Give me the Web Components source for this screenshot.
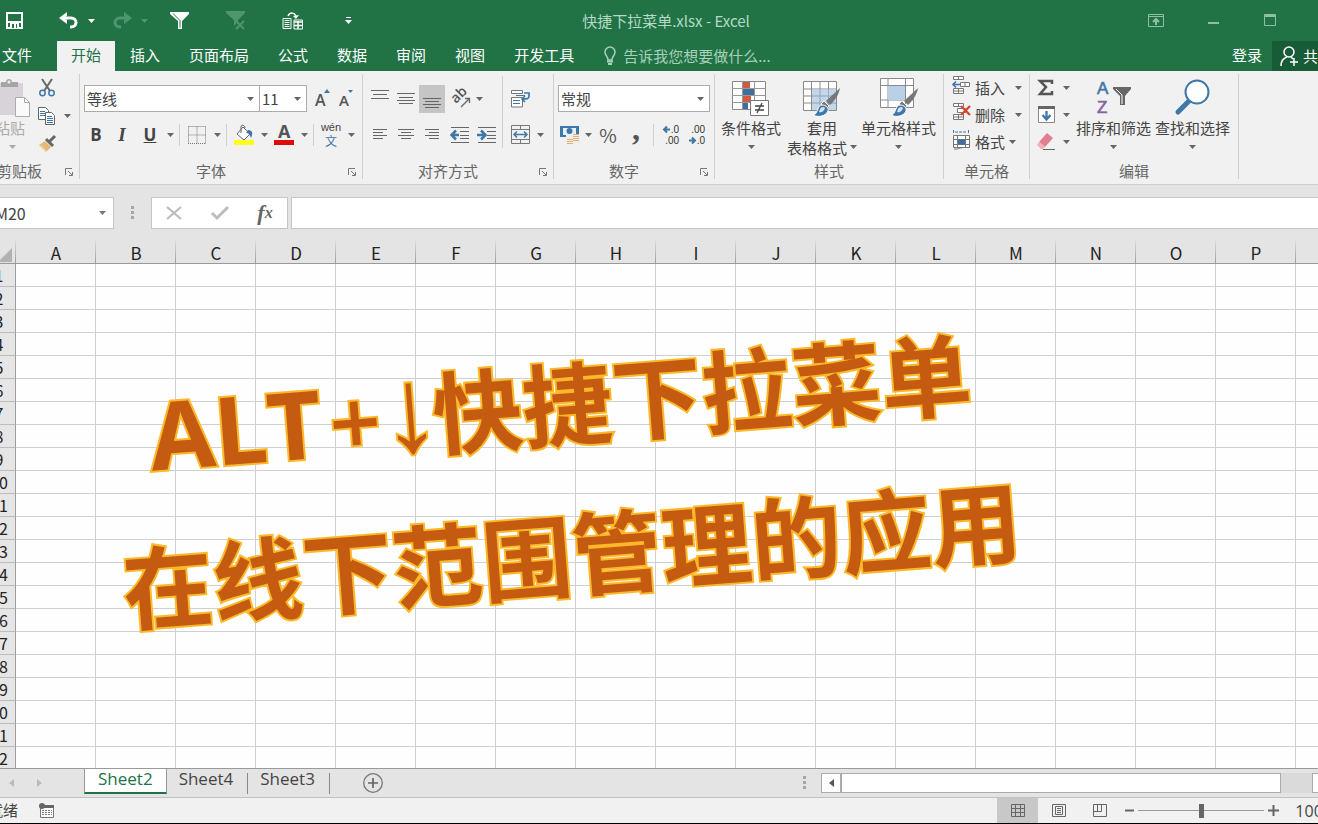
<!DOCTYPE html>
<html lang="zh-CN">
<head>
<meta charset="utf-8">
<title>快捷下拉菜单.xlsx - Excel</title>
<style>
  html, body { margin: 0; height: 100%; }
  body { font: 15px/20px "Noto Sans CJK SC", "Open Sans", sans-serif; color: #444; overflow: hidden; }
</style>
</head>
<body>
<xl-app></xl-app>
<script>
const g = '#666', b = '#3f77a8';
const lines = (list, c = g) => list.map(([x, y, w]) => `<path d="M${x} ${y}.5h${w}" stroke="${c}"/>`).join('');
const letter = (t, x, y, size, color, extra = '') => `<text x="${x}" y="${y}" font-family="Open Sans, sans-serif" font-size="${size}" fill="${color}" ${extra}>${t}</text>`;
const brush = `<path d="M37 7l-14 13 4 4C31 20 36 14 37 7z" fill="#777"/><path d="M21 20l5 5-3 3-5-5z" fill="#777" stroke="#f5f5f5"/><path d="M10 34c5 0 4-10 9-10 4 0 7 3 6 6-2 5-10 7-15 4z" fill="#3f77a8" stroke="#fff"/><path d="M17 28c1-2 4-3 5-1-1 3-3 5-6 4z" fill="#cfe2f2"/>`;
const lightGrid = `<path d="M.5.500h33v29H.5zM8.500.5v29M17 .5v29M25.500.5v29M.5 8h33M.5 15h33M.5 22h33" fill="#fff" stroke="#8a8a8a"/>`;
const ICONS = {
  caret: [7, 4, `<path d="M0 0h7L3.500 4z" fill="currentColor"/>`],
  save: [17, 17, `<path d="M1 1h15v15H1z" fill="none" stroke="#fff" stroke-width="2"/><path d="M2 10h13" stroke="#fff" stroke-width="2"/><path d="M4 11h9v5H4z" fill="#fff"/><path d="M6 12h2v4H6zM10 12h1v4h-1z" fill="#217346"/>`],
  undo: [20, 17, `<path d="M3 6h9c3 0 5 2 5 4.500S15 15 12 15h-1" fill="none" stroke="#fff" stroke-width="3"/><path d="M8 0v4L5 6l3 2v4L0 6z" fill="#fff"/>`],
  redo: [20, 17, `<g fill="none" stroke="#4f9670"><path d="M15 6H8C5 6 3 8 3 10.500S5 15 8 15h1" stroke-width="3"/></g><path d="M12 0v4l3 2-3 2v4l8-6z" fill="#4f9670"/>`],
  filter: [20, 18, `<path d="M0 0h19v2l-7 7v8H8V9L0 2z" fill="#fff"/><path d="M3 1.500l7 7v7" fill="none" stroke="#217346"/>`],
  unfilter: [20, 19, `<g fill="#4f9670"><path d="M0 0h19v2l-7 7v1l-4 5V9L0 2z"/></g><path d="M10 10l8 8M18 10l-8 8" stroke="#4f9670" stroke-width="2"/>`],
  refresh: [21, 18, `<path d="M1 6.500h8v10H1z" fill="none" stroke="#fff"/><path d="M2.500 8.500h5M2.500 10.500h5M2.500 12.500h5M2.500 14.500h5" stroke="#fff"/><path d="M12 8h8.500v9H12z" fill="none" stroke="#fff"/><path d="M12 10h8M12 13.500h8M16 9v8" stroke="#fff" stroke-width="1.500"/><path d="M6 4c2-4 7-4 8 1" fill="none" stroke="#fff" stroke-width="1.500"/><path d="M11 4l3 3 3-4z" fill="#fff"/>`],
  more: [7, 7, `<path d="M1 .5h5" stroke="#fff"/><path d="M0 3h7L3.500 7z" fill="#fff"/>`],
  display: [17, 13, `<path d="M.5.500h15v12H.5zM.5 2.500h15" fill="none" stroke="#8fc0a5"/><path d="M8 11V5M5 8l3-3 3 3" fill="none" stroke="#8fc0a5" stroke-width="2"/>`],
  minimize: [11, 13, `<path d="M0 9h11" stroke="#8fc0a5" stroke-width="2"/>`],
  maximize: [13, 13, `<path d="M.5.500h11v11H.5z" fill="none" stroke="#8fc0a5"/><path d="M0 2h12" stroke="#8fc0a5" stroke-width="2"/>`],
  bulb: [12, 19, `<path d="M4 13c0-4-3-4-3-8a5 5 0 0 1 10 0c0 4-3 4-3 8z" fill="none" stroke="#a9d0ba" stroke-width="1.500"/><path d="M3 14.500h6M4 17h4" stroke="#a9d0ba" stroke-width="2"/>`],
  person: [19, 21, `<circle cx="9" cy="6" r="5" fill="none" stroke="#fff" stroke-width="1.500"/><path d="M1 20c0-5 3-8 6-9M11 11l2 2M14 12v8M10 16h8" fill="none" stroke="#fff" stroke-width="1.500"/>`],
  paste: [30, 38, `<path d="M-6 4h29v32H-6z" fill="#d8d3d8"/><path d="M1 3h5c0-4 6-4 6 0h6v5H1z" fill="#a5a5a5"/><circle cx="9" cy="3" r="1.500" fill="#eee"/><path d="M15.500 18.500h9l5 5v14h-14z" fill="#fafafa" stroke="#aaa"/><path d="M24.500 18.500v5h5" fill="none" stroke="#aaa"/>`],
  cut: [16, 18, `<path d="M3 0l8 12M13 0L5 12" stroke="#666" stroke-width="2"/><circle cx="3.500" cy="14" r="2.700" fill="none" stroke="${b}" stroke-width="1.500"/><circle cx="12.500" cy="14" r="2.700" fill="none" stroke="${b}" stroke-width="1.500"/>`],
  copy: [18, 18, `<path d="M.5.500h7l3 3v9H.5z" fill="#fff" stroke="#666"/><path d="M2 4.500h5M2 6.500h5M2 8.500h5" stroke="${b}"/><path d="M7.500 5.500h6l3 3v9h-9z" fill="#fff" stroke="#666"/><path d="M9 9.500h5M9 11.500h6M9 13.500h6M9 15.500h6" stroke="${b}"/>`],
  painter: [17, 16, `<path d="M16 0l-5 5M7 3l7 7" stroke="#666" stroke-width="3"/><path d="M6 5l6 6-5 5-7-7z" fill="#e5b878"/><path d="M2 9l5 6" stroke="#f3d9ac"/>`],
  grow: [14, 18, letter('A', 0, 16, 16, '#555', 'font-weight="600"') + `<path d="M9 3l3-4 3 4z" fill="${b}"/>`],
  shrink: [14, 18, letter('A', 0, 16, 15, '#555', 'font-weight="600"') + `<path d="M9 0h5l-2.500 3z" fill="${b}"/>`],
  border: [18, 18, `<path d="M.5.500v17M.5.500h17M17.500.5v17M9 .5v17M.5 9h17" fill="none" stroke="#777" stroke-dasharray="1 1"/><path d="M0 17.500h18" stroke="#777" stroke-dasharray="1 1"/>`],
  fill: [22, 20, `<path d="M10 2l7 7-6 6-7-6z" fill="#fff" stroke="#666"/><path d="M8 8V2c0-3 4-2 4 1" fill="none" stroke="#666"/><path d="M15 5c5 0 5 4 3 8-1-3-2-5-5-5z" fill="${b}"/><path d="M1 15h20v5H1z" fill="#ffff1e"/>`],
  fontcolor: [20, 20, letter('A', 4, 13, 18, '#555', 'font-weight="700"') + `<path d="M0 15h20v5H0z" fill="#e00b0b"/>`],
  alignTop: [18, 18, lines([[0, 0, 18], [2, 4, 14], [0, 8, 18]])],
  alignMid: [18, 18, lines([[0, 3, 18], [2, 7, 14], [0, 10, 18], [2, 13, 14]])],
  alignBot: [18, 18, lines([[0, 8, 18], [2, 11, 14], [0, 14, 18], [2, 17, 14]])],
  orient: [19, 17, letter('ab', 6, 14, 14, '#555', 'font-weight="600" transform="rotate(-45 6 14)"') + `<path d="M11 17l8-8M15 8.500h4.500V13" fill="none" stroke="#666" stroke-width="1.300"/>`],
  left: [14, 14, lines([[0, 1, 14], [0, 4, 10], [0, 7, 14], [0, 10, 10]])],
  center: [16, 14, lines([[0, 1, 16], [3, 4, 10], [0, 7, 16], [3, 10, 10]])],
  right: [14, 14, lines([[0, 1, 14], [4, 4, 10], [0, 7, 14], [4, 10, 10]])],
  outdent: [19, 16, lines([[1, 0, 18], [10, 4, 9], [10, 8, 9], [10, 11, 9], [1, 15, 18]]) + `<path d="M9 8H2M6 3.500L1.500 8 6 12.500" fill="none" stroke="${b}" stroke-width="2.500"/>`],
  indent: [19, 16, lines([[1, 0, 18], [10, 4, 9], [10, 8, 9], [10, 11, 9], [1, 15, 18]]) + `<path d="M0 8h7M4 3.500L8.500 8 4 12.500" fill="none" stroke="${b}" stroke-width="2.500"/>`],
  wrap: [19, 18, `<path d="M.5.500h11v3H.5zM.5 7.500h11v9.500H.5z" fill="#fff" stroke="#777"/><path d="M2 10.500h7M2 13.500h7M5 5.500h9" stroke="${b}"/><path d="M13 3h5v3c0 3-2 3-6 3M14 6l-3 3 3 3" fill="none" stroke="${b}" stroke-width="1.700"/>`],
  merge: [19, 19, `<path d="M.5.500h18v18H.5zM.5 4.500h18M.5 14.500h18M9.500.5v4M9.500 14.500v4" fill="none" stroke="#777"/><path d="M3 9.500h13M6 6.500l-3 3 3 3M13 6.500l3 3-3 3" fill="none" stroke="${b}" stroke-width="1.500"/>`],
  currency: [20, 18, `<path d="M0 0h19v11H0z" fill="${b}"/><path d="M3 2h13v7H3z" fill="#e8f1f8"/><circle cx="9.500" cy="5" r="3" fill="${b}"/><path d="M6 9h14v9H6z" fill="#eee"/><path d="M7 13.500h6M7 15.500h6M7 17.500h6M13 8.500h6M13 10.500h6M13 12.500h6M13 14.500h6" stroke="#e5b070"/>`],
  arrowLeft: [7, 7, `<path d="M1 3.500h6M4 .5l-3 3 3 3" fill="none" stroke="${b}" stroke-width="2"/>`],
  arrowRight: [7, 7, `<path d="M0 3.500h6M3 .5l3 3-3 3" fill="none" stroke="${b}" stroke-width="2"/>`],
  condition: [38, 36, `<path d="M.5.500h33v28H.5z" fill="#fff" stroke="#888"/><path d="M.5 7.500h33M.5 14.500h33M.5 21.500h33M10.500.5v28M22.500.5v28" stroke="#999"/><path d="M11 1h7v6h-7zM11 15h8v6h-8z" fill="#cf5b41"/><path d="M11 8h11v6H11zM11 22h5v6h-5z" fill="#3f6f9f"/><path d="M18.500 19.500h18v15h-18z" fill="#fff" stroke="#777"/><path d="M23 25h9M23 29h9M30 22l-5 10" stroke="#444" stroke-width="1.300"/>`],
  tablefmt: [38, 36, lightGrid + `<path d="M9 8h24v21H9z" fill="#b9d0e6" opacity=".85"/><path d="M17 8v21M25.500 8v21M9 15h24M9 22h24" stroke="#9ab"/>` + brush],
  cellstyle: [38, 39, `<path d="M.5.500h33v29H.5zM8 .5v29M25.500.5v29M.5 7.500h33M.5 22h33" fill="#fff" stroke="#8a8a8a"/><path d="M8 8h17v14H8z" fill="#b9d0e6"/><g transform="translate(1 3)">${brush}</g>`],
  insert: [19, 19, `<path d="M1.500.500h10v3h-10zM6.500.5v3M1.500 12.500h10v5h-10zM6.500 12.500v5M1.500 15h10M8.500 6.500h9v4h-9zM13 6.500v4" fill="#fff" stroke="#777"/><path d="M8 8.500H1M4 5.500l-3 3 3 3" fill="none" stroke="${b}" stroke-width="1.700"/>`],
  remove: [19, 19, `<path d="M1.500.500h10v3h-10zM6.500.5v3M5.500 5.500h8v4h-8zM1.500 11.500h10v5h-10zM6.500 11.500v5M1.500 14h10" fill="#fff" stroke="#777"/><path d="M9 3l9 9M18 3l-9 9" stroke="#d0492f" stroke-width="2.300"/>`],
  format: [19, 20, `<path d="M1.500 0v4M16.500 0v4M3 2h12" stroke="${b}" stroke-dasharray="3 1"/><path d="M1.500 5.500h16v12h-16zM5.500 5.500v12M13.500 5.500v12M1.500 9.500h16M1.500 14.500h16" fill="#fff" stroke="#777"/><path d="M6 9.500h7v5H6z" fill="#3f6f9f"/><path d="M2 19c4 1 6-2 8-1" fill="none" stroke="#777"/>`],
  sum: [16, 17, `<path d="M14 5V2H2l6 6-6 7h12v-3" fill="none" stroke="#555" stroke-width="2.500"/>`],
  down: [17, 17, `<path d="M.5.500h16v16H.5z" fill="#fff" stroke="#888"/><path d="M0 1.500h17" stroke="#666" stroke-width="3"/><path d="M8.500 5v8M4.500 9l4 4.500 4-4.500" fill="none" stroke="${b}" stroke-width="2.300"/>`],
  eraser: [18, 17, `<path d="M10 0l6 5-8 9-6-5z" fill="#e0808f"/><path d="M2 9l6 5-2 2H4l-4-4z" fill="#efb0ba"/><path d="M6 16.500h12" stroke="#666"/>`],
  sort: [36, 38, `<g font-family="Liberation Sans, sans-serif" font-size="17" stroke-width=".6"><text x="1" y="15" fill="${b}" stroke="${b}">A</text><text x="1" y="34" fill="#8a5fa5" stroke="#8a5fa5">Z</text></g><path d="M17 8h18v2l-6 7v9h-5v-9l-7-7z" fill="#666"/><path d="M20 10l6 6v9" fill="none" stroke="#fff"/>`],
  find: [36, 38, `<path d="M14 22L3 33" stroke="${b}" stroke-width="5" stroke-linecap="round"/><circle cx="22" cy="13" r="11.500" fill="#fcfeff" stroke="${b}" stroke-width="2"/>`],
  launcher: [8, 8, `<path d="M.5 7V.5H7" fill="none" stroke="#777"/><path d="M3 3l4 4M7.500 4v3.500H4" fill="none" stroke="#777"/>`],
  cancel: [16, 14, `<path d="M1 1l14 12M15 1L1 13" stroke="#bcbcbc" stroke-width="2.300"/>`],
  accept: [18, 14, `<path d="M1 7l5 5L17 1" fill="none" stroke="#bcbcbc" stroke-width="3"/>`],
  dots: [3, 14, `<path d="M0 0h3v3H0zM0 5h3v3H0zM0 10h3v3H0z" fill="#a6a6a6"/>`],
  prev: [5, 8, `<path d="M5 0v8L0 4z" fill="currentColor"/>`],
  next: [5, 8, `<path d="M0 0v8l5-4z" fill="currentColor"/>`],
  add: [20, 20, `<circle cx="10" cy="10" r="9.300" fill="none" stroke="#777" stroke-width="1.300"/><path d="M5 10h10M10 5v10" stroke="#666" stroke-width="1.700"/>`],
  macro: [16, 16, `<path d="M1.500 4.500h13v10h-13z" fill="#fff" stroke="#777"/><path d="M5 2h10v3H5z" fill="#666"/><circle cx="3" cy="3" r="3" fill="#666"/><path d="M3 7.500h10M3 9.500h10M3 11.500h10" stroke="#777" stroke-dasharray="2 1"/>`],
  normal: [14, 14, `<path d="M.5.500h13v12H.5zM4.500.5v12M9.500.5v12M.5 4.500h13M.5 8.500h13" fill="none" stroke="#666"/>`],
  layout: [14, 14, `<path d="M.5.500h13v12H.5zM3.500 2.500h7v8h-7z" fill="none" stroke="#666"/><path d="M5 4.500h4M5 6.500h4M5 8.500h4" stroke="#666"/>`],
  pagebreak: [14, 14, `<path d="M.5.500h13v12H.5zM.5 7.500h8v-7M4.500.5v7" fill="none" stroke="#666"/>`],
  minus: [9, 9, `<path d="M0 4.500h9" stroke="#666" stroke-width="2"/>`],
  plus: [11, 11, `<path d="M0 5.500h11M5.500 0v11" stroke="#666" stroke-width="2"/>`],
  corner: [14, 14, `<path d="M14 0v14H0z" fill="#b2b2b2"/>`]
};

const define = (name, html, init) => {
  const tpl = document.createElement('template');
  tpl.innerHTML = `<style>*{box-sizing:border-box}button,input,select{font:inherit;color:inherit;border:0;margin:0;padding:0;background:none;border-radius:0}a{color:inherit;text-decoration:none}</style>` + html;
  customElements.define(name, class extends HTMLElement {
    connectedCallback() {
      if (this.shadowRoot) return;
      this.attachShadow({ mode: 'open' }).append(tpl.content.cloneNode(true));
      if (init) init.call(this, this.shadowRoot);
    }
  });
};

/* Icon by name */
define('xl-icon', `<style>:host{display:inline-flex;flex:none}svg{display:block;overflow:visible}</style>`, function (root) {
  const [w, h, body] = ICONS[this.getAttribute('name')];
  root.innerHTML += `<svg width="${w}" height="${h}" viewBox="0 0 ${w} ${h}" aria-hidden="true">${body}</svg>`;
});

/* Small tool button; "drop" adds a caret */
define('xl-tool', `<style>
  :host{display:inline-flex;width:28px;height:28px;flex:none}
  :host([drop]){width:40px}
  :host([w="24"]){width:24px} :host([w="26"]){width:26px} :host([w="36"]){width:36px}
  :host([on]){background:#c5c5c5}
  button{display:flex;flex:1;align-items:center;min-width:0}
  span{flex:1;display:flex;justify-content:center;align-items:center}
  .caret{display:none;flex:none;width:12px;color:#666}
  :host([drop]) .caret{display:flex}
</style><button type="button"><span><slot></slot></span><span class="caret"><xl-icon name="caret"></xl-icon></span></button>`, function (root) {
  root.querySelector('button').setAttribute('aria-label', this.getAttribute('hint'));
  const icon = this.getAttribute('icon');
  if (icon) root.querySelector('slot').innerHTML = `<xl-icon name="${icon}"></xl-icon>`;
});

/* Large ribbon button: icon over a label, caret on the last line */
define('xl-big', `<style>
  :host{display:block;flex:none}
  button{display:flex;flex-direction:column;align-items:center;padding:0 4px;line-height:19px;white-space:nowrap}
  :host([tight]) button{padding:0 2px}
  .pic{height:41px;display:flex;align-items:flex-end;margin-bottom:1px}
  .last{display:flex;align-items:center;gap:3px;height:20px}
  .last xl-icon{color:#666}
</style><button type="button"><span class="pic"></span><slot></slot><span class="last"><slot name="second"></slot><xl-icon name="caret"></xl-icon></span></button>`, function (root) {
  root.querySelector('.pic').innerHTML = `<xl-icon name="${this.getAttribute('icon')}"></xl-icon>`;
});

/* One-line ribbon button */
define('xl-line', `<style>
  :host{display:block}
  button{display:flex;align-items:center;gap:4px;height:27px;white-space:nowrap}
  .caret{margin-left:6px;color:#666} :host([near]) .caret{margin-left:0}
</style><button type="button"><span id="icon"></span><slot></slot><xl-icon class="caret" name="caret"></xl-icon></button>`, function (root) {
  root.querySelector('#icon').innerHTML = `<xl-icon name="${this.getAttribute('icon')}"></xl-icon>`;
});

define('xl-combo', `<style>
  :host{display:grid;height:27px;align-items:center;background:#fff;border:1px solid #ababab}
  select,xl-icon{grid-area:1/1}
  select{appearance:none;width:100%;height:25px;padding:0 2px;outline:0}
  xl-icon{justify-self:end;margin-right:5px;color:#666;pointer-events:none}
</style><select></select><xl-icon name="caret"></xl-icon>`, function (root) {
  const select = root.querySelector('select');
  select.setAttribute('aria-label', this.getAttribute('hint'));
  select.add(new Option(this.getAttribute('value')));
});

define('xl-group', `<style>
  :host{display:flex;flex-direction:column;flex:none;margin:3px 0 5px;border-right:1px solid #cfcfcf}
  .body{flex:1;display:flex}
  footer{position:relative;display:flex;justify-content:center;align-items:center;height:20px;margin-bottom:-2px;color:#666;white-space:nowrap}
  :host([launch]) footer{padding-right:20px}
  :host([edge]) footer{margin-left:-20px}
  button{position:absolute;right:6px;top:7px;display:flex}
  :host(:not([launch])) button{display:none}
</style><div class="body"><slot></slot></div><footer><span></span><button type="button" aria-label="更多选项"><xl-icon name="launcher"></xl-icon></button></footer>`, function (root) {
  root.querySelector('span').textContent = this.getAttribute('label');
});

define('xl-titlebar', `<style>
  :host{display:grid;grid-template-columns:1fr auto 1fr;align-items:center;height:41px;color:#fff}
  .quick,.window{display:flex;align-items:center;height:38px}
  .quick button{display:flex;align-items:center;gap:9px;height:28px}
  .quick{padding-left:6px;gap:36px}
  .quick .dim{color:#4f9670}
  h1{margin:0;padding-left:14px;font:inherit;color:#b5d9c5;white-space:nowrap}
  .window{justify-content:flex-end;padding-right:19px}
  .window button{width:57px;display:flex;justify-content:center}
  .history{display:flex;gap:17px;margin-right:-14px}
</style>
<div class="quick">
  <button aria-label="保存"><xl-icon name="save"></xl-icon></button>
  <div class="history"><button aria-label="撤消"><xl-icon name="undo"></xl-icon><xl-icon name="caret"></xl-icon></button>
  <button class="dim" aria-label="恢复"><xl-icon name="redo"></xl-icon><xl-icon name="caret"></xl-icon></button></div>
  <button aria-label="筛选"><xl-icon name="filter"></xl-icon></button>
  <button aria-label="清除筛选"><xl-icon name="unfilter"></xl-icon></button>
  <button aria-label="刷新"><xl-icon name="refresh"></xl-icon></button>
  <button style="padding-left:6px" aria-label="自定义快速访问工具栏"><xl-icon name="more"></xl-icon></button>
</div>
<h1>快捷下拉菜单.xlsx - Excel</h1>
<div class="window">
  <button aria-label="功能区显示选项"><xl-icon name="display"></xl-icon></button>
  <button aria-label="最小化"><xl-icon name="minimize"></xl-icon></button>
  <button aria-label="最大化"><xl-icon name="maximize"></xl-icon></button>
</div>`);

define('xl-tabs', `<style>
  :host{display:flex;height:30px;color:#fff;overflow:hidden;line-height:28px;white-space:nowrap}
  nav{display:flex;gap:1px}
  nav a{padding:0 14px}
  nav .file{padding:0 24px 0 2px}
  nav .on{background:#f1f1f1;color:#217346}
  label{display:flex;align-items:center;gap:7px;margin-left:16px;flex:1}
  input{flex:1;min-width:0;outline:0;color:#a9d0ba}
  input::placeholder{color:#a9d0ba;opacity:1}
  .login{padding:0 10px}
  .share{display:flex;align-items:center;gap:4px;background:#185c37;padding:0 0 0 8px;margin-right:-15px}
</style>
<nav><a class="file" href="#file">文件</a><a class="on" href="#home">开始</a><a href="#insert">插入</a><a href="#layout">页面布局</a><a href="#formula">公式</a><a href="#data">数据</a><a href="#review">审阅</a><a href="#view">视图</a><a href="#dev">开发工具</a></nav>
<label><xl-icon name="bulb"></xl-icon><input type="text" aria-label="告诉我您想要做什么" placeholder="告诉我您想要做什么..."></label>
<a class="login" href="#login">登录</a>
<button class="share" type="button"><xl-icon name="person"></xl-icon>共享</button>`);

define('xl-ribbon', `<style>
  :host{display:flex;height:114px;background:#f1f1f1;border-bottom:1px solid #d0d0d0;overflow:hidden}
  .col{display:flex;flex-direction:column}
  .rows{display:flex;flex-direction:column;gap:9px;padding:11px 4px 0;flex:1}
  .row{display:flex;align-items:center;height:27px}
  .sep{width:1px;height:22px;background:#cfcfcf;margin:0 3px;flex:none}
  .tall{height:72px;background:#cfcfcf;width:1px;margin:2px 3px 0}
  .clip{width:80px} .font{width:283px} .align{width:191px} .num{width:161px} .styles{width:229px} .cells{width:86px} .edit{width:209px}
  .big{display:flex;padding:2px 2px 0}
  .face{flex:1} .size{width:48px;margin-left:-1px;margin-right:3px} .fmt{flex:1}
  b,i,u{font-family:"Open Sans",sans-serif;font-size:17px;font-weight:700;color:#444}
  i{font-family:"Liberation Serif",serif;font-size:19px}
  .py{display:flex;flex-direction:column;align-items:center;font:11px/12px "Liberation Sans",sans-serif;color:#444}
  .py em{font:12px/15px "Noto Sans CJK SC",sans-serif;color:#3f77a8}
  .dec{display:grid;justify-items:end;font:10px/11px "Liberation Sans",sans-serif;color:#333}
  .dec span{display:flex;align-items:center;gap:1px}
  .pct{font-size:19px;color:#555} .comma{font:700 32px/20px "Liberation Serif",serif;height:32px;color:#555}
  .paste{width:30px;margin-top:5px;color:#aaa;white-space:nowrap;line-height:19px}
  .paste button{display:flex;flex-direction:column;align-items:center}
  .paste .txt{margin:1px 0 8px -10px}
  .paste .drop{margin-left:-6px}
  .stack{padding-left:8px}
  .tools{padding-left:2px}
  .tools xl-tool{height:27px}
  .clipcol{padding-left:3px}
</style>
<xl-group class="clip" label="剪贴板" launch edge>
  <div class="paste"><button type="button" aria-label="粘贴"><xl-icon name="paste"></xl-icon><span class="txt">粘贴</span><xl-icon class="drop" name="caret"></xl-icon></button></div>
  <div class="col clipcol"><xl-tool icon="cut" hint="剪切"></xl-tool><xl-tool drop icon="copy" hint="复制"></xl-tool><xl-tool icon="painter" hint="格式刷"></xl-tool></div>
</xl-group>
<xl-group class="font" label="字体" launch><div class="rows">
  <div class="row"><xl-combo class="face" hint="字体" value="等线"></xl-combo><xl-combo class="size" hint="字号" value="11"></xl-combo><xl-tool w="24" icon="grow" hint="增大字号"></xl-tool><xl-tool w="24" icon="shrink" hint="减小字号"></xl-tool></div>
  <div class="row"><xl-tool w="24" hint="加粗"><b>B</b></xl-tool><xl-tool hint="倾斜"><i>I</i></xl-tool><xl-tool drop hint="下划线"><u>U</u></xl-tool><span class="sep"></span><xl-tool drop icon="border" hint="边框"></xl-tool><span class="sep"></span><xl-tool drop icon="fill" hint="填充颜色"></xl-tool><xl-tool drop icon="fontcolor" hint="字体颜色"></xl-tool><span class="sep"></span><xl-tool drop hint="拼音"><span class="py">wén<em>文</em></span></xl-tool></div>
</div></xl-group>
<xl-group class="align" label="对齐方式" launch>
  <div class="rows" style="flex:none;padding-right:0">
    <div class="row"><xl-tool w="26" icon="alignTop" hint="顶端对齐"></xl-tool><xl-tool w="26" icon="alignMid" hint="垂直居中"></xl-tool><xl-tool w="26" on icon="alignBot" hint="底端对齐"></xl-tool><xl-tool drop icon="orient" hint="方向"></xl-tool></div>
    <div class="row"><xl-tool w="26" icon="left" hint="左对齐"></xl-tool><xl-tool w="26" icon="center" hint="居中"></xl-tool><xl-tool w="26" icon="right" hint="右对齐"></xl-tool><xl-tool icon="outdent" hint="减少缩进量"></xl-tool><xl-tool w="26" icon="indent" hint="增加缩进量"></xl-tool></div>
  </div><span class="tall"></span>
  <div class="rows" style="padding-left:0"><div class="row"><xl-tool icon="wrap" hint="自动换行"></xl-tool></div><div class="row"><xl-tool drop icon="merge" hint="合并后居中"></xl-tool></div></div>
</xl-group>
<xl-group class="num" label="数字" launch><div class="rows">
  <div class="row"><xl-combo class="fmt" hint="数字格式" value="常规"></xl-combo></div>
  <div class="row"><xl-tool drop w="36" icon="currency" hint="会计数字格式"></xl-tool><xl-tool hint="百分比样式"><span class="pct">%</span></xl-tool><xl-tool hint="千位分隔样式"><span class="comma">,</span></xl-tool><span class="sep"></span><xl-tool hint="增加小数位数"><span class="dec"><span><xl-icon name="arrowLeft"></xl-icon>.0</span><span>.00</span></span></xl-tool><xl-tool w="24" hint="减少小数位数"><span class="dec"><span>.00</span><span><xl-icon name="arrowRight"></xl-icon>.0</span></span></xl-tool></div>
</div></xl-group>
<xl-group class="styles" label="样式"><div class="big"><xl-big icon="condition">条件格式</xl-big><xl-big icon="tablefmt" tight>套用<span slot="second">表格格式</span></xl-big><xl-big icon="cellstyle" tight>单元格样式</xl-big></div></xl-group>
<xl-group class="cells" label="单元格"><div class="stack"><xl-line icon="insert">插入</xl-line><xl-line icon="remove">删除</xl-line><xl-line near icon="format">格式</xl-line></div></xl-group>
<xl-group class="edit" label="编辑"><div class="col tools"><xl-tool drop icon="sum" hint="自动求和"></xl-tool><xl-tool drop icon="down" hint="填充"></xl-tool><xl-tool drop icon="eraser" hint="清除"></xl-tool></div><div class="big"><xl-big tight icon="sort">排序和筛选</xl-big><xl-big tight icon="find">查找和选择</xl-big></div></xl-group>`);

define('xl-formula', `<style>
  :host{display:flex;height:53px;padding:12px 0 9px;background:#e4e4e4;overflow:hidden}
  .box{display:flex;align-items:center;background:#fff;border:1px solid #c6c6c6;height:32px}
  .name{width:120px;margin-left:-6px;padding:0 7px 0 0;font-size:16px}
  .name input{flex:1;min-width:0;outline:0}
  .name button{display:flex;color:#777}
  .dots{width:37px;display:flex;align-items:center;justify-content:center;height:32px}
  .act{width:137px;justify-content:space-around;margin-right:3px}
  .act button{display:flex}
  .fx{font:italic 700 22px/26px "Liberation Serif",serif;color:#666}
  .fx sub{font-size:16px;vertical-align:baseline}
  .line{flex:1;border-right:0} .line input{flex:1;height:28px;outline:0;padding:0 6px}
</style>
<div class="box name"><input type="text" aria-label="名称框" value="M20"><button type="button" aria-label="名称列表"><xl-icon name="caret"></xl-icon></button></div>
<span class="dots"><xl-icon name="dots"></xl-icon></span>
<div class="box act"><button type="button" aria-label="取消"><xl-icon name="cancel"></xl-icon></button><button type="button" aria-label="输入"><xl-icon name="accept"></xl-icon></button><button type="button" class="fx" aria-label="插入函数">f<sub>x</sub></button></div>
<div class="box line"><input type="text" aria-label="编辑栏"></div>`);

define('xl-sheet', `<style>
  :host{display:block;position:relative;flex:1;min-height:0;overflow:hidden;background:#fefefe}
  table{border-collapse:separate;border-spacing:0;table-layout:fixed;width:1393px;margin-left:-17px;color:#222}
  th{font-weight:400;padding:0;background-color:#e6e6e6;height:23px;line-height:20px;text-align:center;border-right:1px solid #9c9c9c;border-bottom:1px solid #bcbcbc;font-size:16px}
  thead th{height:26px;padding-top:5px;font-size:17px;background:linear-gradient(#e4e4e4,#9c9c9c) right/1px 100% no-repeat #e4e4e4;border-right:0;border-bottom-color:#999}
  thead th:first-child{width:33px}
  thead xl-icon{float:right;margin:3px 4px 0 0}
  td{padding:0;border-right:1px solid #d0d0d0;border-bottom:1px solid #d0d0d0}
</style><table><thead></thead><tbody></tbody></table><slot></slot>`, function (root) {
  const letters = [...'ABCDEFGHIJKLMNOPQ'];
  root.querySelector('thead').innerHTML = '<tr><th><xl-icon name="corner"></xl-icon></th>' + letters.map(l => `<th scope="col">${l}</th>`).join('') + '</tr>';
  root.querySelector('tbody').innerHTML = Array.from({ length: 22 }, (_, i) => `<tr><th scope="row">${i + 1}</th>${'<td></td>'.repeat(letters.length)}</tr>`).join('');
});

/* Tilted decorative heading drawn over the cells */
define('xl-wordart', `<style>
  :host{position:absolute;left:566px;top:242px;transform:translate(-50%,-50%) rotate(-4.4deg);text-align:center;white-space:nowrap;
    font:700 90px/151px "Open Sans","Noto Sans CJK SC",sans-serif;color:#c55a11;-webkit-text-stroke:4px #fbb829;paint-order:stroke fill}
  p{margin:0}
  .latin{font-size:94px;line-height:0}
  .plus{font-weight:600;padding-left:8px}
  .arrow{font:400 120px/0 "Liberation Sans",sans-serif;margin-right:-8px}
</style><p><span class="latin">ALT</span><span class="plus">+</span><span class="arrow">↓</span>快捷下拉菜单</p><p>在线下范围管理的应用</p>`);

define('xl-sheetbar', `<style>
  :host{display:flex;height:29px;background:#e4e4e4;border-top:1px solid #999;overflow:hidden;font:17px/20px "Open Sans",sans-serif}
  .nav{display:flex;width:84px;padding-left:9px;gap:23px;color:#bbb;flex:none}
  .nav button{display:flex;align-items:center}
  .tabs{display:flex;height:25px}
  .tabs a{padding:0 15px 0 12px;background:linear-gradient(#888,#888) right bottom/1px 21px no-repeat}
  .tabs .on{background:#fff;color:#217346;border-bottom:2px solid #217346;border-right:1px solid #999;border-left:1px solid #999;padding:0 13px}
  .add{display:flex;align-items:center;margin-left:33px}
  .scroll{display:flex;align-items:center;margin-left:auto;width:529px;margin-right:-14px;flex:none}
  .scroll button{width:20px;height:20px;border:1px solid #ababab;background:#fff;display:flex;align-items:center;justify-content:center;color:#555}
  .track{flex:1;height:20px;background:#dadada;padding-right:31px}
  .thumb{height:20px;border:1px solid #ababab;background:#fff}
  .grip{margin-right:15px;display:flex}
</style>
<div class="nav"><button type="button" aria-label="上一张"><xl-icon name="prev"></xl-icon></button><button type="button" aria-label="下一张"><xl-icon name="next"></xl-icon></button></div>
<div class="tabs"><a class="on" href="#s2">Sheet2</a><a href="#s4">Sheet4</a><a href="#s3">Sheet3</a></div>
<button class="add" type="button" aria-label="新工作表"><xl-icon name="add"></xl-icon></button>
<div class="scroll"><span class="grip"><xl-icon name="dots"></xl-icon></span><button type="button" aria-label="向左滚动"><xl-icon name="prev"></xl-icon></button><div class="track"><div class="thumb"></div></div><button type="button" aria-label="向右滚动"><xl-icon name="next"></xl-icon></button></div>`);

define('xl-status', `<style>
  :host{display:flex;align-items:center;height:27px;background:#f1f1f1;border-top:1px solid #c0c0c0;border-bottom:1px solid #000;overflow:hidden;white-space:nowrap}
  .ready{margin:0 21px 2px -12px}
  button{display:flex;align-items:center;justify-content:center;height:25px}
  .views{display:flex;margin-left:auto} .views button{width:41px} .views .on{background:#c8c8c8}
  .zoom{display:flex;align-items:center;gap:4px;padding-left:5px}
  input{appearance:none;width:126px;height:24px;outline:0;background:linear-gradient(#999,#999) center/100% 1px no-repeat}
  input::-webkit-slider-thumb{appearance:none;width:5px;height:14px;background:#666}
  .pct{font:16px/20px "Open Sans",sans-serif;margin:0 -18px 0 12px}
</style>
<span class="ready">就绪</span><xl-icon name="macro"></xl-icon>
<div class="views"><button type="button" class="on" aria-label="普通"><xl-icon name="normal"></xl-icon></button><button type="button" aria-label="页面布局"><xl-icon name="layout"></xl-icon></button><button type="button" aria-label="分页预览"><xl-icon name="pagebreak"></xl-icon></button></div>
<div class="zoom"><button type="button" aria-label="缩小"><xl-icon name="minus"></xl-icon></button><input type="range" min="0" max="200" value="100" aria-label="显示比例"><button type="button" aria-label="放大"><xl-icon name="plus"></xl-icon></button><span class="pct">100%</span></div>`);

define('xl-app', `<style>
  :host{display:flex;flex-direction:column;height:100vh;overflow:hidden}
  header{background:#217346}
</style><header><xl-titlebar></xl-titlebar><xl-tabs></xl-tabs></header><xl-ribbon></xl-ribbon><xl-formula></xl-formula><xl-sheet><xl-wordart></xl-wordart></xl-sheet><xl-sheetbar></xl-sheetbar><xl-status></xl-status>`);
</script>
</body>
</html>
